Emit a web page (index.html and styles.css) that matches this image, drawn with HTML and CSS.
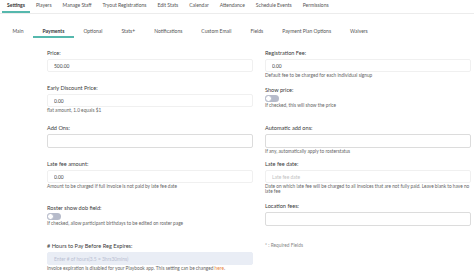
FILE: index.html
```html
<!DOCTYPE html>
<html lang="en">
<head>
    <meta charset="UTF-8">
    <meta name="viewport" content="width=device-width, initial-scale=1.0">
    <title>Settings - Payments</title>
    <link rel="stylesheet" href="styles.css">
</head>
<body>
    <nav class="topnav">
        <a class="active">Settings</a>
        <a>Players</a>
        <a>Manage Staff</a>
        <a>Tryout Registrations</a>
        <a>Edit Stats</a>
        <a>Calendar</a>
        <a>Attendance</a>
        <a>Schedule Events</a>
        <a>Permissions</a>
    </nav>

    <nav class="subnav">
        <a>Main</a>
        <a class="active">Payments</a>
        <a>Optional</a>
        <a>Stats+</a>
        <a>Notifications</a>
        <a>Custom Email</a>
        <a>Fields</a>
        <a>Payment Plan Options</a>
        <a>Waivers</a>
    </nav>

    <form class="settings-form">
        <div class="field">
            <label>Price:</label>
            <input type="text" class="input" value="500.00">
        </div>
        <div class="field">
            <label>Registration Fee:</label>
            <input type="text" class="input" value="0.00">
            <p class="help">Default fee to be charged for each individual signup</p>
        </div>

        <div class="field">
            <label>Early Discount Price:</label>
            <input type="text" class="input" value="0.00">
            <p class="help">flat amount, 1.0 equals $1</p>
        </div>
        <div class="field shifted">
            <label>Show price:</label>
            <span class="toggle"></span>
            <p class="help">If checked, this will show the price</p>
        </div>

        <div class="field">
            <label>Add Ons:</label>
            <div class="select"></div>
        </div>
        <div class="field">
            <label>Automatic add ons:</label>
            <div class="select"></div>
            <p class="help">if any, automatically apply to rosterstatus</p>
        </div>

        <div class="field">
            <label>Late fee amount:</label>
            <input type="text" class="input" value="0.00">
            <p class="help">Amount to be charged if full invoice is not paid by late fee date</p>
        </div>
        <div class="field">
            <label>Late fee date:</label>
            <input type="text" class="input" placeholder="Late fee date">
            <p class="help">Date on which late fee will be charged to all invoices that are not fully paid. Leave blank to have no late fee</p>
        </div>

        <div class="field">
            <label>Roster show dob field:</label>
            <span class="toggle"></span>
            <p class="help">If checked, allow participant birthdays to be edited on roster page</p>
        </div>
        <div class="field raised">
            <label>Location fees:</label>
            <div class="select"></div>
        </div>

        <div class="field">
            <label># Hours to Pay Before Reg Expires:</label>
            <input type="text" class="input disabled" placeholder="Enter # of hours(3.5 = 3hrs30mins)" disabled>
            <p class="help">Invoice expiration is disabled for your Playbook app. This setting can be changed <a class="link">here</a>.</p>
        </div>
        <div class="field">
            <p class="required">* : Required Fields</p>
        </div>
    </form>
</body>
</html>
```

FILE: styles.css
```css
* {
    margin: 0;
    padding: 0;
    box-sizing: border-box;
}

html, body {
    overflow: hidden;
}

body {
    background-color: #ffffff;
    font-family: Lato, "Open Sans", sans-serif;
    color: #333;
    width: 474px;
}

.topnav {
    display: flex;
    gap: 1px;
    padding-left: 2px;
    border-bottom: 1px solid #ececec;
}

.topnav a {
    padding: 0 5px;
    font-size: 5px;
    line-height: 11px;
    color: #555;
    border-bottom: 2px solid transparent;
    white-space: nowrap;
}

.topnav a.active {
    color: #333;
    font-weight: 700;
    border-bottom-color: #55b8ad;
}

.subnav {
    display: flex;
    padding-left: 3px;
    margin-top: 13px;
}

.subnav a {
    padding: 0 9.5px;
    font-size: 5px;
    line-height: 9px;
    color: #555;
    border-bottom: 2px solid transparent;
    white-space: nowrap;
}

.subnav a.active {
    color: #333;
    font-weight: 700;
    border-bottom-color: #55b8ad;
}

.settings-form {
    display: grid;
    grid-template-columns: 206px 206px;
    grid-template-rows: 35px 40px 36px 44px 38px auto;
    column-gap: 12px;
    margin: 11px 0 0 47px;
}

.field label {
    display: block;
    font-size: 5.6px;
    line-height: 7px;
    margin-bottom: 3px;
    color: #3a3a3a;
    font-weight: 400;
}

.field.shifted {
    padding-top: 2px;
}

.field.raised {
    margin-top: -2px;
}

.input {
    display: block;
    width: 100%;
    height: 13px;
    padding: 0 6px;
    border: 1px solid #f0f0f0;
    border-radius: 2px;
    font-family: inherit;
    font-size: 4.9px;
    color: #444;
    background-color: #fff;
    outline: none;
}

.input::placeholder {
    color: #c2c2c2;
}

.input.disabled {
    background-color: #e9edf5;
    border-color: #e9edf5;
}

.input.disabled::placeholder {
    color: #b9c0d2;
}

.select {
    width: 100%;
    height: 14px;
    border: 1px solid #dcdcdc;
    border-radius: 2px;
    background-color: #fff;
}

.help {
    font-size: 4.75px;
    line-height: 5px;
    margin-top: 1px;
    color: #666;
}

.link {
    color: #e8843c;
}

.toggle {
    display: block;
    position: relative;
    width: 14px;
    height: 7px;
    margin-top: -1px;
    border-radius: 4px;
    background-color: #b6bbca;
}

.toggle::before {
    content: "";
    position: absolute;
    left: 0;
    top: 0;
    width: 7px;
    height: 7px;
    border-radius: 50%;
    background-color: #fff;
    border: 1px solid #b6bbca;
    box-sizing: border-box;
}

.required {
    font-size: 4.8px;
    line-height: 7px;
    color: #888;
}
```
